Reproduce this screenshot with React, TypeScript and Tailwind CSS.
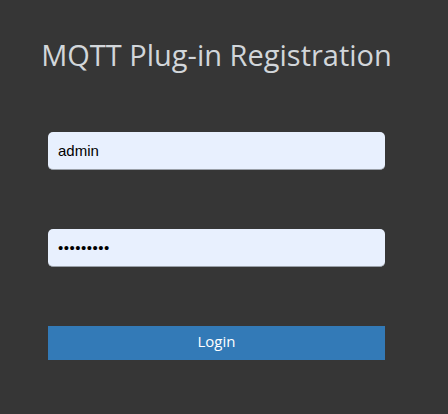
export default function App() {
  return (
    <div className="w-[448px] h-[414px] bg-[#363636] pl-[48px] pt-[37px]" style={{ fontFamily: '"Open Sans", "Noto Sans", sans-serif' }}>
      <div className="w-[337px] flex flex-col">
        <h1 className="-mx-[12px] text-[29px] leading-[36px] text-[#d2d6da] text-center whitespace-nowrap">MQTT Plug-in Registration</h1>
        <div className="mt-[59px] h-[38px] rounded-[5px] bg-[#e8f0fe] border-b border-[#9aa0a8] flex items-center pl-[10px] pt-[2px] text-[15px] text-black" style={{ fontFamily: '"Liberation Sans", Arial, sans-serif' }}>
          admin
        </div>
        <div className="mt-[59px] h-[38px] rounded-[5px] bg-[#e8f0fe] border-b border-[#9aa0a8] flex items-center pl-[10px] pt-[2px] text-[15px] text-black tracking-[0.5px]" style={{ fontFamily: '"Liberation Sans", Arial, sans-serif' }}>
          •••••••••
        </div>
        <div className="mt-[59px] h-[34px] bg-[#337ab7] flex items-center justify-center text-[15px] text-white pb-[4px]">
          Login
        </div>
      </div>
    </div>
  );
}
